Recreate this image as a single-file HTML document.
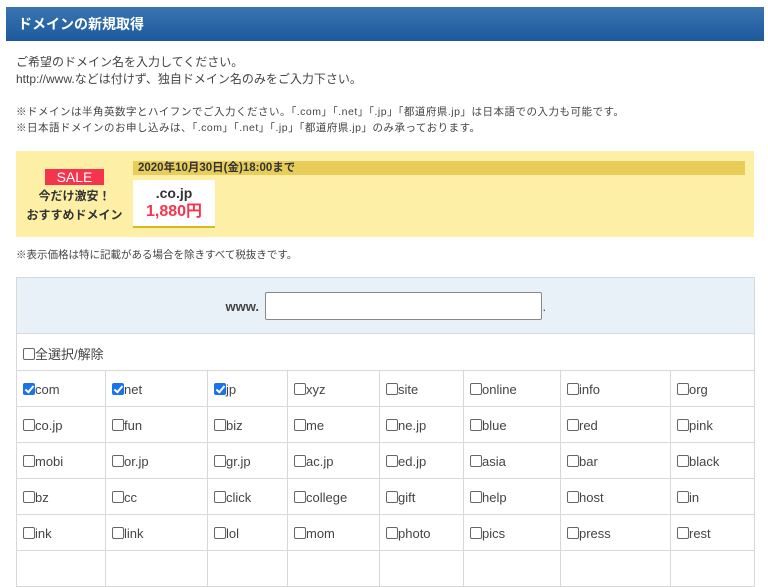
<!DOCTYPE html>
<html><head><meta charset="utf-8"><style>
*{margin:0;padding:0;box-sizing:border-box}
body{width:768px;height:562px;overflow:hidden;background:#fff;font-family:"Liberation Sans","Noto Sans CJK JP",sans-serif;color:#444;position:relative}
.a{position:absolute;white-space:nowrap}
.hd{left:6px;top:7px;width:758px;height:34px;background:linear-gradient(#3a74b1,#1c5a9d);color:#fff;font-weight:bold;font-size:14px;line-height:34px;padding-left:12px}
.t1{font-size:12px;line-height:17px;left:16px;top:54px}
.t2{font-size:10.5px;line-height:16px;left:16px;top:104px;letter-spacing:0.5px}
.sale{left:16px;top:151px;width:738px;height:86px;background:#fdf0a6}
.tag{left:45px;top:169px;width:59px;height:16px;background:#f5344e;color:#fff;font-size:14px;line-height:16px;text-align:center}
.date{left:133px;top:161px;width:612px;height:14px;background:#e8cd5a;font-size:11.5px;font-weight:bold;line-height:14px;padding-left:5px;color:#333}
.box{left:133px;top:180px;width:82px;height:48px;background:#fff;border-bottom:2px solid #d8b626;text-align:center}
table{position:absolute;left:16px;top:277px;border-collapse:collapse;table-layout:fixed;width:738px}
td{border:1px solid #d8d8d8;font-size:13px;height:36px;padding-left:6px;white-space:nowrap;vertical-align:middle;padding-top:2px}
.cb{display:inline-block;width:12px;height:12px;border:1px solid #666;border-radius:2px;vertical-align:-1px;background:#fff}
.ck{background:#1a73e8;border-color:#1a73e8;position:relative}
.ck:after{content:"";position:absolute;left:3px;top:0px;width:3px;height:7px;border:solid #fff;border-width:0 2px 2px 0;transform:rotate(40deg)}
</style></head><body>
<div class="a hd">ドメインの新規取得</div>
<div class="a t1">ご希望のドメイン名を入力してください。<br>http://www.などは付けず、独自ドメイン名のみをご入力下さい。</div>
<div class="a t2">※ドメインは半角英数字とハイフンでご入力ください。「.com」「.net」「.jp」「都道府県.jp」は日本語での入力も可能です。<br>※日本語ドメインのお申し込みは、「.com」「.net」「.jp」「都道府県.jp」のみ承っております。</div>
<div class="a sale"></div>
<div class="a tag">SALE</div>
<div class="a" style="left:16px;top:187px;width:117px;text-align:center;font-size:12px;line-height:19px;font-weight:bold;color:#333">今だけ激安！<br>おすすめドメイン</div>
<div class="a date">2020年10月30日(金)18:00まで</div>
<div class="a box"><div style="font-size:14px;font-weight:bold;line-height:18px;margin-top:4px;color:#333">.co.jp</div><div style="font-size:16px;font-weight:bold;color:#f5344e;line-height:20px">1,880円</div></div>
<div class="a" style="left:16px;top:247px;font-size:10.5px">※表示価格は特に記載がある場合を除きすべて税抜きです。</div>
<table>
<colgroup><col style="width:89px"><col style="width:102px"><col style="width:80px"><col style="width:92px"><col style="width:84px"><col style="width:97px"><col style="width:110px"><col style="width:84px"></colgroup>
<tr><td colspan="8" style="height:56px;background:#e8f0f8;padding:0"><span style="position:absolute;left:209px;top:21px;font-weight:bold;color:#444">www.</span><span style="position:absolute;left:248px;top:14px;width:277px;height:28px;border:1px solid #888;background:#fff;border-radius:2px"></span><span style="position:absolute;left:526px;top:21px">.</span></td></tr>
<tr><td colspan="8" style="height:37px"><span class="cb"></span>全選択/解除</td></tr>
<tr><td><span class="cb ck"></span>com</td><td><span class="cb ck"></span>net</td><td><span class="cb ck"></span>jp</td><td><span class="cb"></span>xyz</td><td><span class="cb"></span>site</td><td><span class="cb"></span>online</td><td><span class="cb"></span>info</td><td><span class="cb"></span>org</td></tr>
<tr><td><span class="cb"></span>co.jp</td><td><span class="cb"></span>fun</td><td><span class="cb"></span>biz</td><td><span class="cb"></span>me</td><td><span class="cb"></span>ne.jp</td><td><span class="cb"></span>blue</td><td><span class="cb"></span>red</td><td><span class="cb"></span>pink</td></tr>
<tr><td><span class="cb"></span>mobi</td><td><span class="cb"></span>or.jp</td><td><span class="cb"></span>gr.jp</td><td><span class="cb"></span>ac.jp</td><td><span class="cb"></span>ed.jp</td><td><span class="cb"></span>asia</td><td><span class="cb"></span>bar</td><td><span class="cb"></span>black</td></tr>
<tr><td><span class="cb"></span>bz</td><td><span class="cb"></span>cc</td><td><span class="cb"></span>click</td><td><span class="cb"></span>college</td><td><span class="cb"></span>gift</td><td><span class="cb"></span>help</td><td><span class="cb"></span>host</td><td><span class="cb"></span>in</td></tr>
<tr><td><span class="cb"></span>ink</td><td><span class="cb"></span>link</td><td><span class="cb"></span>lol</td><td><span class="cb"></span>mom</td><td><span class="cb"></span>photo</td><td><span class="cb"></span>pics</td><td><span class="cb"></span>press</td><td><span class="cb"></span>rest</td></tr>
<tr><td></td><td></td><td></td><td></td><td></td><td></td><td></td><td></td></tr>
</table>
</body></html>
